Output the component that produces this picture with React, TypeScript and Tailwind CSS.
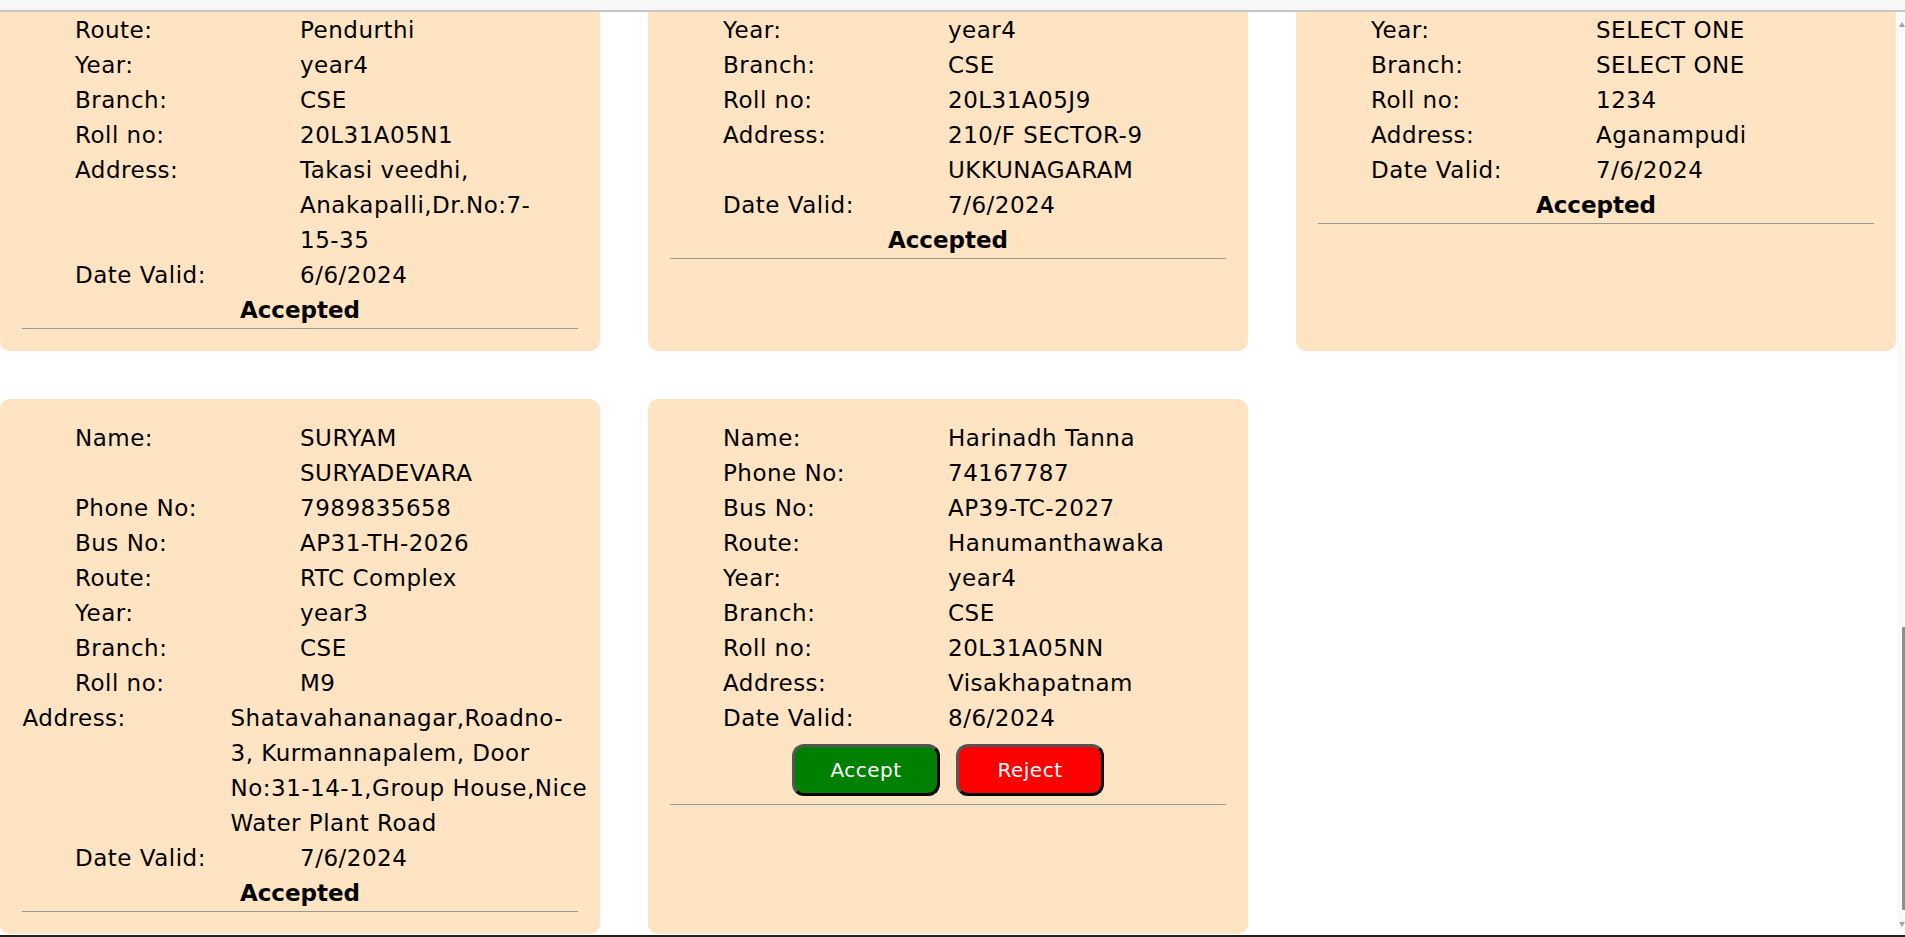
import React, { useLayoutEffect, useRef } from "react";

type Row = { label: string; lines: string[]; wide?: boolean };
type Pass = { rows: Row[]; status: "accepted" | "pending" };

const passes: Pass[] = [
	{
		rows: [
			{ label: "Name:", lines: ["Dadi Venkata", "Sai Kiran"] },
			{ label: "Phone No:", lines: ["9390215674"] },
			{ label: "Bus No:", lines: ["AP31-TD-1146"] },
			{ label: "Route:", lines: ["Pendurthi"] },
			{ label: "Year:", lines: ["year4"] },
			{ label: "Branch:", lines: ["CSE"] },
			{ label: "Roll no:", lines: ["20L31A05N1"] },
			{ label: "Address:", lines: ["Takasi veedhi,", "Anakapalli,Dr.No:7-", "15-35"] },
			{ label: "Date Valid:", lines: ["6/6/2024"] },
		],
		status: "accepted",
	},
	{
		rows: [
			{ label: "Name:", lines: ["Ch Ravi Teja"] },
			{ label: "Phone No:", lines: ["8688412390"] },
			{ label: "Bus No:", lines: ["AP31-TH-2024"] },
			{ label: "Route:", lines: ["Ukkunagaram"] },
			{ label: "Year:", lines: ["year4"] },
			{ label: "Branch:", lines: ["CSE"] },
			{ label: "Roll no:", lines: ["20L31A05J9"] },
			{ label: "Address:", lines: ["210/F SECTOR-9", "UKKUNAGARAM"] },
			{ label: "Date Valid:", lines: ["7/6/2024"] },
		],
		status: "accepted",
	},
	{
		rows: [
			{ label: "Name:", lines: ["test"] },
			{ label: "Phone No:", lines: ["1234567890"] },
			{ label: "Bus No:", lines: ["SELECT ONE"] },
			{ label: "Route:", lines: ["SELECT ONE"] },
			{ label: "Year:", lines: ["SELECT ONE"] },
			{ label: "Branch:", lines: ["SELECT ONE"] },
			{ label: "Roll no:", lines: ["1234"] },
			{ label: "Address:", lines: ["Aganampudi"] },
			{ label: "Date Valid:", lines: ["7/6/2024"] },
		],
		status: "accepted",
	},
	{
		rows: [
			{ label: "Name:", lines: ["SURYAM", "SURYADEVARA"] },
			{ label: "Phone No:", lines: ["7989835658"] },
			{ label: "Bus No:", lines: ["AP31-TH-2026"] },
			{ label: "Route:", lines: ["RTC Complex"] },
			{ label: "Year:", lines: ["year3"] },
			{ label: "Branch:", lines: ["CSE"] },
			{ label: "Roll no:", lines: ["M9"] },
			{
				label: "Address:",
				lines: [
					"Shatavahananagar,Roadno-",
					"3, Kurmannapalem, Door",
					"No:31-14-1,Group House,Nice",
					"Water Plant Road",
				],
				wide: true,
			},
			{ label: "Date Valid:", lines: ["7/6/2024"] },
		],
		status: "accepted",
	},
	{
		rows: [
			{ label: "Name:", lines: ["Harinadh Tanna"] },
			{ label: "Phone No:", lines: ["74167787"] },
			{ label: "Bus No:", lines: ["AP39-TC-2027"] },
			{ label: "Route:", lines: ["Hanumanthawaka"] },
			{ label: "Year:", lines: ["year4"] },
			{ label: "Branch:", lines: ["CSE"] },
			{ label: "Roll no:", lines: ["20L31A05NN"] },
			{ label: "Address:", lines: ["Visakhapatnam"] },
			{ label: "Date Valid:", lines: ["8/6/2024"] },
		],
		status: "pending",
	},
];

const PassCard = ({ pass }: { pass: Pass }) => (
	<div className="bg-[#ffe4c4] rounded-[10px] p-[22px]">
		{pass.rows.map((row) =>
			row.wide ? (
				<div key={row.label} className="flex w-[555px] mx-auto">
					<div className="w-[208px] shrink-0">{row.label}</div>
					<div className="w-[347px] shrink-0">
						{row.lines.map((l) => (
							<div key={l} className="whitespace-nowrap">
								{l}
							</div>
						))}
					</div>
				</div>
			) : (
				<div key={row.label} className="flex w-[450px] mx-auto">
					<div className="w-[225px] shrink-0">{row.label}</div>
					<div className="w-[225px] shrink-0">
						{row.lines.map((l) => (
							<div key={l} className="whitespace-nowrap">
								{l}
							</div>
						))}
					</div>
				</div>
			)
		)}
		{pass.status === "accepted" ? (
			<div className="text-center font-bold tracking-normal">Accepted</div>
		) : (
			<div className="flex justify-center gap-4 my-2">
				<button className="w-[148px] h-[52px] rounded-[12px] border-[3px] border-t-[#555] border-l-[#555] border-b-black border-r-black bg-[#008000] text-white text-[20px] leading-none">
					Accept
				</button>
				<button className="w-[148px] h-[52px] rounded-[12px] border-[3px] border-t-[#555] border-l-[#555] border-b-black border-r-black bg-[#ff0000] text-white text-[20px] leading-none">
					Reject
				</button>
			</div>
		)}
		<div className="border-t border-[#9a9a9a]" />
	</div>
);

const App = () => {
	const scrollRef = useRef<HTMLDivElement>(null);

	// page is scrolled a bit down in the screenshot
	useLayoutEffect(() => {
		if (scrollRef.current) scrollRef.current.scrollTop = 161;
	}, []);

	return (
		<div className="h-screen flex flex-col overflow-hidden bg-white text-black [font-family:'DejaVu_Sans',sans-serif] text-[23px] leading-[35px] tracking-[0.5px]">
			<div className="h-[12px] shrink-0 bg-[#f7f7f7] border-b-2 border-[#c6c6c6]" />
			<div className="flex-1 min-h-0 flex">
				<div
					ref={scrollRef}
					className="flex-1 overflow-y-auto [scrollbar-width:none]"
				>
					<div className="grid grid-cols-[600px_600px_600px] gap-12 pb-12">
						{passes.map((p, i) => (
							<PassCard key={i} pass={p} />
						))}
					</div>
				</div>
				{/* thin scrollbar */}
				<div className="w-[8px] shrink-0 bg-[#fafafa] flex flex-col items-end">
					<svg width="6" height="5" viewBox="0 0 6 5" className="mt-[10px]">
						<path d="M3 0 L6 5 L0 5 Z" fill="#a3a3a3" />
					</svg>
					<div className="flex-1" />
					<div className="w-[3px] h-[283px] bg-[#8f8f8f] rounded-l-[1px]" />
					<svg width="6" height="5" viewBox="0 0 6 5" className="mt-[12px] mb-[8px]">
						<path d="M0 0 L6 0 L3 5 Z" fill="#a3a3a3" />
					</svg>
				</div>
			</div>
			<div className="h-[2px] shrink-0 bg-[#202020]" />
		</div>
	);
};

export default App;
